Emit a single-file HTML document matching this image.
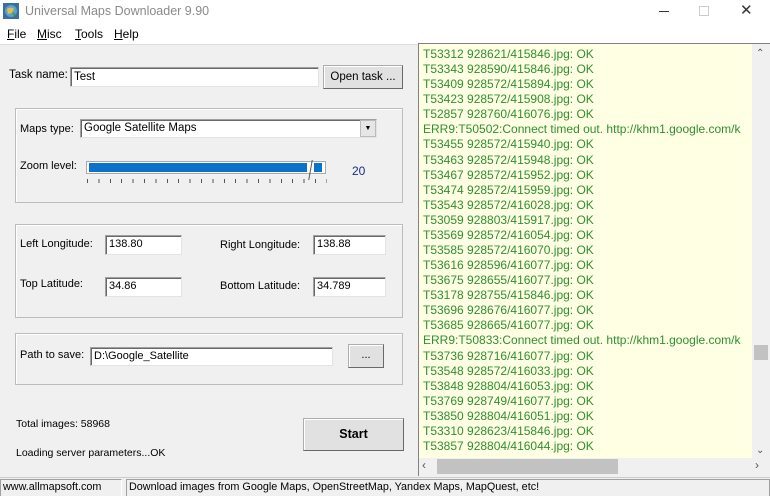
<!DOCTYPE html>
<html><head><meta charset="utf-8"><style>
*{margin:0;padding:0;box-sizing:border-box}
body{width:770px;height:496px;overflow:hidden;background:#f0f0f0;font-family:"Liberation Sans",sans-serif;font-size:11px;color:#000;position:relative}
.a{position:absolute}
.grp{position:absolute;border:1px solid #bcbcbc;box-shadow:inset 1px 1px 0 #fff}
.in{position:absolute;background:#fff;border:1px solid #a0a0a0;border-right-color:#e3e3e3;border-bottom-color:#e3e3e3;box-shadow:inset 1px 1px 0 #696969;padding:2px 3px;font-size:11px;line-height:13px}
.btn{position:absolute;background:#e1e1e1;border:1px solid #adadad;border-right-color:#696969;border-bottom-color:#696969;box-shadow:inset 1px 1px 0 #fff;text-align:center}
.log{position:absolute;left:418px;top:43px;width:352px;height:433px;background:#ffffe3;border:1px solid #828282;border-right:none;overflow:hidden}
.log div{color:#2f8f2f;font-size:12px;height:15.08px;line-height:15.08px;padding-left:4px;white-space:nowrap;overflow:hidden;width:333px}
u{text-decoration:underline}
</style></head><body>
<div class="a" style="left:0;top:0;width:770px;height:44px;background:#fff"></div>
<svg class="a" style="left:3px;top:3px" width="16" height="16"><rect width="16" height="16" fill="#3a6ea5"/><circle cx="8" cy="8" r="6" fill="#5aa0d8"/><path d="M4 6 Q8 3 11 6 L9 10 L5 11 Z" fill="#e0c040"/><path d="M9 9 L13 11 L11 14 Z" fill="#4a9a3a"/></svg>
<div class="a" style="left:25px;top:4px;font-size:12.5px;color:#8a8a8a">Universal Maps Downloader 9.90</div>
<div class="a" style="left:659px;top:11px;width:10px;height:1px;background:#333"></div>
<div class="a" style="left:699px;top:6px;width:10px;height:10px;border:1px solid #ccc"></div>
<div class="a" style="left:740px;top:1px;font-size:15px;color:#333">✕</div>
<div class="a" style="left:7px;top:27px;font-size:12px"><u>F</u>ile</div>
<div class="a" style="left:37px;top:27px;font-size:12px"><u>M</u>isc</div>
<div class="a" style="left:75px;top:27px;font-size:12px"><u>T</u>ools</div>
<div class="a" style="left:114px;top:27px;font-size:12px"><u>H</u>elp</div>
<div class="a" style="left:0;top:44px;width:418px;height:1px;background:#ddd"></div>

<div class="a" style="left:9px;top:69px;font-size:11.5px">Task name:</div>
<div class="in" style="left:70px;top:67px;width:249px;height:20px;padding-top:3px;font-size:11.5px">Test</div>
<div class="btn" style="left:323px;top:65px;width:80px;height:24px;line-height:22px;font-size:11.5px">Open task ...</div>

<div class="grp" style="left:15px;top:108px;width:388px;height:95px"></div>
<div class="a" style="left:20px;top:123px">Maps type:</div>
<div class="in" style="left:80px;top:119px;width:297px;height:19px;padding-top:2px;font-size:11.5px">Google Satellite Maps</div>
<div class="a" style="left:360px;top:120px;width:16px;height:17px;background:#e6e6e6;border:1px solid #bbb;font-size:7px;text-align:center;line-height:15px">▼</div>
<div class="a" style="left:20px;top:160px">Zoom level:</div>
<div class="a" style="left:86px;top:161px;width:240px;height:13px;background:#fff;border:1px solid #aaa"></div>
<div class="a" style="left:89px;top:163px;width:218px;height:9px;background:#0a72c8"></div>
<div class="a" style="left:314px;top:163px;width:8px;height:9px;background:#0a72c8"></div>
<div class="a" style="left:310px;top:160px;width:3px;height:20px;border-left:1px solid #555;transform:skewX(-10deg)"></div>
<div class="a" style="left:87px;top:179px;width:240px;height:4px;background:repeating-linear-gradient(90deg,#555 0 1px,transparent 1px 11.4px)"></div>
<div class="a" style="left:352px;top:164px;font-size:12px;color:#1e2a80">20</div>

<div class="grp" style="left:15px;top:224px;width:388px;height:94px"></div>
<div class="a" style="left:20px;top:238px">Left Longitude:</div>
<div class="in" style="left:105px;top:235px;width:77px;height:20px">138.80</div>
<div class="a" style="left:220px;top:239px">Right Longitude:</div>
<div class="in" style="left:313px;top:235px;width:73px;height:20px">138.88</div>
<div class="a" style="left:20px;top:278px">Top Latitude:</div>
<div class="in" style="left:105px;top:277px;width:77px;height:20px">34.86</div>
<div class="a" style="left:220px;top:280px">Bottom Latitude:</div>
<div class="in" style="left:313px;top:277px;width:73px;height:20px">34.789</div>

<div class="grp" style="left:15px;top:333px;width:388px;height:52px"></div>
<div class="a" style="left:20px;top:349px">Path to save:</div>
<div class="in" style="left:90px;top:347px;width:243px;height:19px">D:\Google_Satellite</div>
<div class="btn" style="left:348px;top:344px;width:36px;height:24px;line-height:20px">...</div>

<div class="a" style="left:16px;top:418px;font-size:10.5px">Total images: 58968</div>
<div class="a" style="left:16px;top:447px;font-size:10.5px">Loading server parameters...OK</div>
<div class="btn" style="left:303px;top:418px;width:101px;height:33px;line-height:31px;font-weight:bold;font-size:12.5px">Start</div>

<div class="log">
<div style="margin-top:3px">T53312 928621/415846.jpg: OK</div>
<div>T53343 928590/415846.jpg: OK</div>
<div>T53409 928572/415894.jpg: OK</div>
<div>T53423 928572/415908.jpg: OK</div>
<div>T52857 928760/416076.jpg: OK</div>
<div>ERR9:T50502:Connect timed out. http://khm1.google.com/k</div>
<div>T53455 928572/415940.jpg: OK</div>
<div>T53463 928572/415948.jpg: OK</div>
<div>T53467 928572/415952.jpg: OK</div>
<div>T53474 928572/415959.jpg: OK</div>
<div>T53543 928572/416028.jpg: OK</div>
<div>T53059 928803/415917.jpg: OK</div>
<div>T53569 928572/416054.jpg: OK</div>
<div>T53585 928572/416070.jpg: OK</div>
<div>T53616 928596/416077.jpg: OK</div>
<div>T53675 928655/416077.jpg: OK</div>
<div>T53178 928755/415846.jpg: OK</div>
<div>T53696 928676/416077.jpg: OK</div>
<div>T53685 928665/416077.jpg: OK</div>
<div>ERR9:T50833:Connect timed out. http://khm1.google.com/k</div>
<div>T53736 928716/416077.jpg: OK</div>
<div>T53548 928572/416033.jpg: OK</div>
<div>T53848 928804/416053.jpg: OK</div>
<div>T53769 928749/416077.jpg: OK</div>
<div>T53850 928804/416051.jpg: OK</div>
<div>T53310 928623/415846.jpg: OK</div>
<div>T53857 928804/416044.jpg: OK</div>
</div>
<div class="a" style="left:752px;top:44px;width:18px;height:414px;background:#f0f0f0"></div>
<div class="a" style="left:756px;top:48px;font-size:10px;color:#555">⌃</div>
<div class="a" style="left:754px;top:345px;width:14px;height:15px;background:#c2c2c2"></div>
<div class="a" style="left:756px;top:445px;font-size:10px;color:#555">⌄</div>
<div class="a" style="left:419px;top:458px;width:351px;height:18px;background:#f0f0f0"></div>
<div class="a" style="left:437px;top:459px;width:181px;height:15px;background:#c2c2c2"></div>
<div class="a" style="left:422px;top:458px;font-size:12px;color:#555">‹</div>
<div class="a" style="left:755px;top:458px;font-size:12px;color:#555">›</div>

<div class="a" style="left:0;top:477px;width:770px;height:19px;background:#f0f0f0;border-top:1px solid #ccc"></div>
<div class="a" style="left:0;top:479px;width:122px;height:17px;border:1px solid #a0a0a0;border-right-color:#fff;border-bottom:none;padding-left:2px;font-size:10.8px;line-height:15px">www.allmapsoft.com</div>
<div class="a" style="left:126px;top:479px;width:644px;height:17px;border:1px solid #a0a0a0;border-bottom:none;padding-left:2px;font-size:10.8px;line-height:15px">Download images from Google Maps, OpenStreetMap, Yandex Maps, MapQuest, etc!</div>
</body></html>
